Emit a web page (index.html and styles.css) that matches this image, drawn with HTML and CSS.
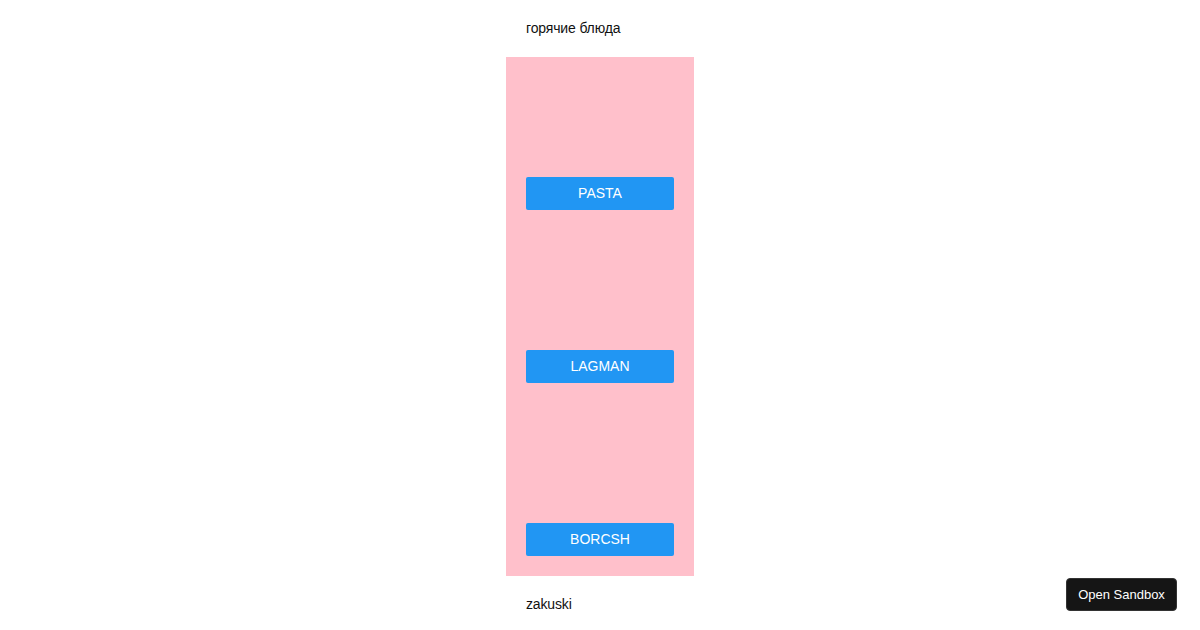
FILE: index.html
```html
<!DOCTYPE html>
<html>
<head>
<meta charset="utf-8">
<link rel="stylesheet" href="styles.css">
</head>
<body>
<div class="column">
  <div class="title">горячие блюда</div>
  <div class="list">
    <div class="item"><button class="btn">Pasta</button></div>
    <div class="item"><button class="btn">Lagman</button></div>
    <div class="item"><button class="btn">Borcsh</button></div>
  </div>
  <div class="title">zakuski</div>
</div>
<a class="sandbox">Open Sandbox</a>
</body>
</html>
```
FILE: styles.css
```css
html, body { margin: 0; padding: 0; background: #fff; }
body {
  font-family: "Liberation Sans", Arial, sans-serif;
  font-size: 14px;
  color: #111;
  display: flex;
  justify-content: center;
}
.column { width: 188px; }
.title { padding: 20px; line-height: 17px; letter-spacing: -0.15px; }
.list { background: #ffc0cb; }
.item {
  height: 173px;
  box-sizing: border-box;
  padding: 0 20px 20px;
  display: flex;
  align-items: flex-end;
}
.btn {
  width: 100%;
  height: 33px;
  border: 0;
  border-radius: 2px;
  background: #2196f3;
  color: #fff;
  font-family: "Liberation Sans", Arial, sans-serif;
  font-size: 14px;
  text-transform: uppercase;
  padding: 0 0 2px;
}
.sandbox {
  position: fixed;
  right: 23px;
  bottom: 19px;
  background: #151515;
  color: #fff;
  font-size: 13px;
  border-radius: 4px;
  height: 33px;
  width: 111px;
  display: flex;
  align-items: center;
  justify-content: center;
  border: 1px solid #333;
  box-sizing: border-box;
}
```
